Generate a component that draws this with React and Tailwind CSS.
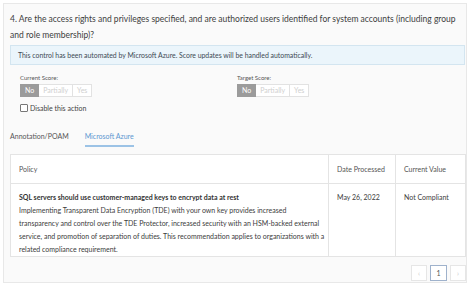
import React from 'react';

const ScoreButtons = () => (
  <div className="mt-[2px] flex h-[13px] w-fit text-[7px] leading-[11px]">
    <span className="border border-[#9b9b9b] bg-[#9b9b9b] px-[4px] text-white">No</span>
    <span className="border border-l-0 border-[#e2e2e2] bg-white px-[4px] text-[#cfcfcf]">Partially</span>
    <span className="border border-l-0 border-[#e2e2e2] bg-white px-[4px] text-[#cfcfcf]">Yes</span>
  </div>
);

export default function App() {
  return (
    <div className="h-[283px] w-[474px] overflow-hidden bg-white pl-[3px] pt-[3px] font-['Lato','Open_Sans',sans-serif] text-[#444]">
      <div className="h-[280px] w-[464px] border border-[#e8e8e8] bg-[#fafafa] px-[6px] pt-[7px]">
        <h2 className="w-[456px] text-[8.5px] leading-[16px] text-[#404040]">
          4. Are the access rights and privileges specified, and are authorized users identified for system accounts (including group and role membership)?
        </h2>

        <div className="mt-[2px] flex h-[20px] w-[455px] items-center border border-[#d3e5f0] bg-[#ebf5fb] px-[7px] text-[6.9px] text-[#3d4a55]">
          This control has been automated by Microsoft Azure. Score updates will be handled automatically.
        </div>

        <div className="mt-[8px] flex pl-[10px]">
          <div className="w-[217px]">
            <div className="text-[6px] leading-[9px] text-[#555]">Current Score:</div>
            <ScoreButtons />
          </div>
          <div>
            <div className="text-[6px] leading-[9px] text-[#555]">Target Score:</div>
            <ScoreButtons />
          </div>
        </div>

        <label className="mt-[6px] flex items-center gap-[2px] pl-[10px] text-[7px] leading-[10px] text-[#444]">
          <span className="h-[8px] w-[8px] rounded-[1px] border border-[#777] bg-white" />
          Disable this action
        </label>

        <div className="mt-[18px] flex gap-[16px] text-[7px] leading-[10px]">
          <div className="pb-[6px] text-[#555]">Annotation/POAM</div>
          <div className="border-b-2 border-[#9cc3e6] pb-[4px] text-[#5b97d1]">Microsoft Azure</div>
        </div>

        <table className="mt-[7px] w-[455px] table-fixed border-collapse bg-white text-[7px]">
          <thead>
            <tr className="h-[29px] whitespace-nowrap text-left text-[#555]">
              <th className="w-[318px] border border-[#e4e4e4] px-[8px] font-normal">Policy</th>
              <th className="w-[67px] border border-[#e4e4e4] px-[8px] font-normal">Date Processed</th>
              <th className="w-[70px] border border-[#e4e4e4] px-[8px] font-normal">Current Value</th>
            </tr>
          </thead>
          <tbody>
            <tr className="align-top leading-[13px] text-[#3c3c3c]">
              <td className="border border-[#e4e4e4] pb-0 pl-[8px] pr-[3px] pt-[7px]">
                <div className="font-bold text-[#333]">SQL servers should use customer-managed keys to encrypt data at rest</div>
                <div>
                  Implementing Transparent Data Encryption (TDE) with your own key provides increased transparency and control over the TDE Protector, increased security with an HSM-backed external service, and promotion of separation of duties. This recommendation applies to organizations with a related compliance requirement.
                </div>
              </td>
              <td className="whitespace-nowrap border border-[#e4e4e4] px-[8px] pt-[7px]">May 26, 2022</td>
              <td className="whitespace-nowrap border border-[#e4e4e4] px-[8px] pt-[7px]">Not Compliant</td>
            </tr>
          </tbody>
        </table>

        <div className="mt-[8px] flex w-[456px] justify-end gap-[3px] text-[7px]">
          <span className="flex h-[16px] w-[16px] items-center justify-center border border-[#e6e6e6] bg-white text-[#c8c8c8]">‹</span>
          <span className="flex h-[16px] w-[17px] items-center justify-center border border-[#9fb2cc] bg-white text-[#555]">1</span>
          <span className="flex h-[16px] w-[16px] items-center justify-center border border-[#e6e6e6] bg-white text-[#c8c8c8]">›</span>
        </div>
      </div>
    </div>
  );
}
